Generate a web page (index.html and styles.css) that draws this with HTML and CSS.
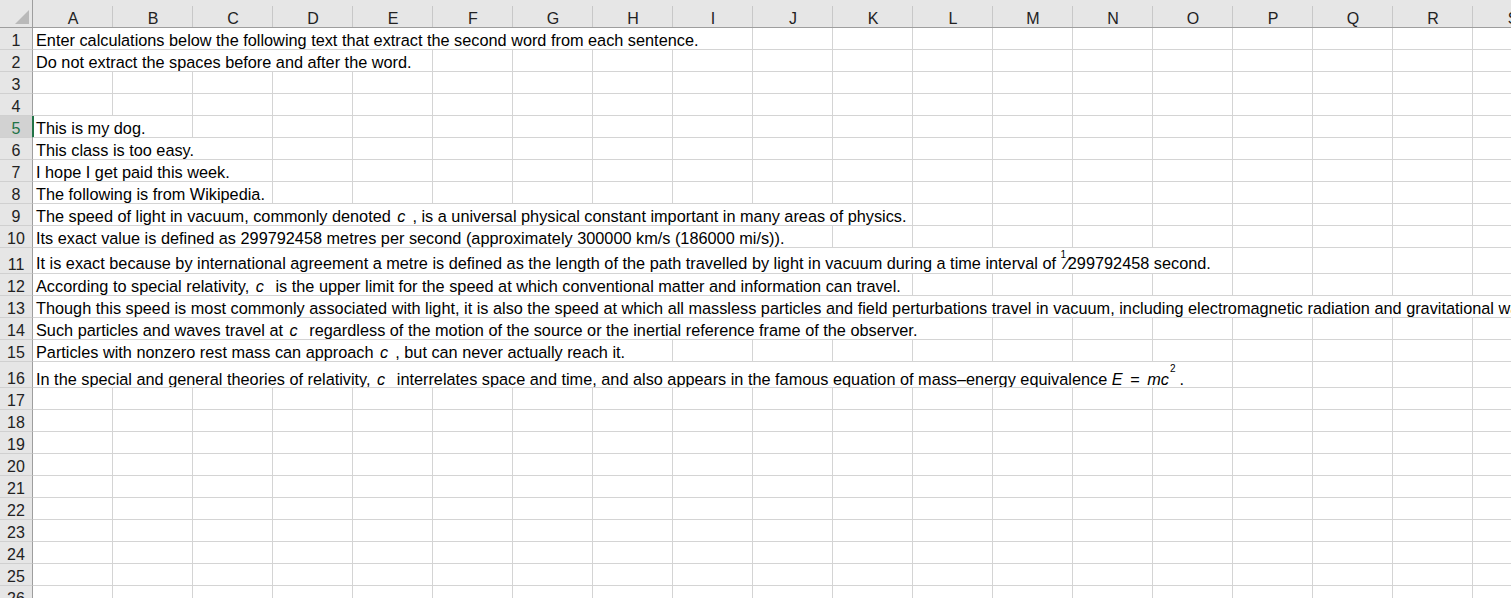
FILE: index.html
```html
<!DOCTYPE html>
<html>
<head>
    <link rel="stylesheet" href="styles.css">
</head>
<body>
    <div class="sheet">
        <div class="row head">
            <div class="corner">
                <svg width="14" height="14" viewBox="0 0 14 14"><polygon points="14,0 14,14 0,14" fill="#b9b9b9"/></svg>
            </div>
            <div class="col">A</div>
            <div class="col">B</div>
            <div class="col">C</div>
            <div class="col">D</div>
            <div class="col">E</div>
            <div class="col">F</div>
            <div class="col">G</div>
            <div class="col">H</div>
            <div class="col">I</div>
            <div class="col">J</div>
            <div class="col">K</div>
            <div class="col">L</div>
            <div class="col">M</div>
            <div class="col">N</div>
            <div class="col">O</div>
            <div class="col">P</div>
            <div class="col">Q</div>
            <div class="col">R</div>
            <div class="col">S</div>
            <div class="col">T</div>
        </div>

        <div class="row"><div class="num">1</div><div class="cell span-9">Enter calculations below the following text that extract the second word from each sentence.</div></div>
        <div class="row"><div class="num">2</div><div class="cell span-5">Do not extract the spaces before and after the word.</div></div>
        <div class="row"><div class="num">3</div></div>
        <div class="row"><div class="num">4</div></div>
        <div class="row"><div class="num active">5</div><div class="cell span-2 active">This is my dog.</div></div>
        <div class="row"><div class="num">6</div><div class="cell span-3">This class is too easy.</div></div>
        <div class="row"><div class="num">7</div><div class="cell span-3">I hope I get paid this week.</div></div>
        <div class="row"><div class="num">8</div><div class="cell span-3">The following is from Wikipedia.</div></div>
        <div class="row"><div class="num">9</div><div class="cell span-11">The speed of light in vacuum, commonly denoted <i class="var">c</i>, is a universal physical constant important in many areas of physics.</div></div>
        <div class="row"><div class="num">10</div><div class="cell span-10">Its exact value is defined as 299792458 metres per second (approximately 300000 km/s (186000 mi/s)).</div></div>
        <div class="row tall"><div class="num">11</div><div class="cell span-15">It is exact because by international agreement a metre is defined as the length of the path travelled by light in vacuum during a time interval of <sup>1</sup><span class="frasl">&frasl;</span>299792458 second.</div></div>
        <div class="row"><div class="num">12</div><div class="cell span-11">According to special relativity, <i class="var">c</i> is the upper limit for the speed at which conventional matter and information can travel.</div></div>
        <div class="row"><div class="num">13</div><div class="cell span-20">Though this speed is most commonly associated with light, it is also the speed at which all massless particles and field perturbations travel in vacuum, including electromagnetic radiation and gravitational waves.</div></div>
        <div class="row"><div class="num">14</div><div class="cell span-12">Such particles and waves travel at <i class="var">c</i> regardless of the motion of the source or the inertial reference frame of the observer.</div></div>
        <div class="row"><div class="num">15</div><div class="cell span-8">Particles with nonzero rest mass can approach <i class="var">c</i>, but can never actually reach it.</div></div>
        <div class="row tall"><div class="num">16</div><div class="cell span-15">In the special and general theories of relativity, <i class="var">c</i> interrelates space and time, and also appears in the famous equation of mass&ndash;energy equivalence <i>E</i> <span class="op">=</span> <i class="power">mc</i><sup class="pow">2</sup>.</div></div>
        <div class="row"><div class="num">17</div></div>
        <div class="row"><div class="num">18</div></div>
        <div class="row"><div class="num">19</div></div>
        <div class="row"><div class="num">20</div></div>
        <div class="row"><div class="num">21</div></div>
        <div class="row"><div class="num">22</div></div>
        <div class="row"><div class="num">23</div></div>
        <div class="row"><div class="num">24</div></div>
        <div class="row"><div class="num">25</div></div>
        <div class="row"><div class="num">26</div></div>
    </div>
</body>
</html>
```

FILE: styles.css
```css
body {
    margin: 0;
    padding: 0;
    overflow: hidden;
    background: #fff;
    font-family: "Liberation Sans", Arial, sans-serif;
    font-size: 16px;
    color: #000;
}

.sheet {
    width: 1633px;
}

.row {
    display: grid;
    grid-template-columns: 33px repeat(20, 80px);
    height: 22px;
    background-image:
        linear-gradient(#d4d4d4, #d4d4d4),
        repeating-linear-gradient(to right, transparent 0 79px, #d4d4d4 79px 80px);
    background-size: 100% 1px, auto;
    background-position: 0 100%, 33px 0;
    background-repeat: no-repeat, repeat;
}

.row.tall {
    height: 26px;
}

.row.head {
    height: 28px;
    background: #e6e6e6;
}

.corner {
    box-sizing: border-box;
    display: flex;
    align-items: flex-end;
    justify-content: flex-end;
    padding: 0 3px 3px 0;
    border-right: 1px solid #9e9e9e;
    border-bottom: 1px solid #9e9e9e;
}

.col {
    box-sizing: border-box;
    display: flex;
    align-items: flex-end;
    justify-content: center;
    line-height: 17px;
    color: #222;
    border-bottom: 1px solid #9e9e9e;
    background: linear-gradient(#c8c8c8, #c8c8c8) no-repeat right bottom / 1px 21px;
}

.num {
    box-sizing: border-box;
    display: flex;
    align-items: flex-end;
    justify-content: center;
    line-height: 17px;
    color: #222;
    background: #e6e6e6;
    border-right: 1px solid #9e9e9e;
    border-bottom: 1px solid #d0d0d0;
}

.num.active {
    background: #d2d2d2;
    color: #217346;
    border-right-color: #217346;
}

.cell {
    box-sizing: border-box;
    margin: 0 1px 1px 0;
    padding: 4px 0 0 3px;
    font-size: 16.3px;
    line-height: 17px;
    white-space: nowrap;
    overflow: hidden;
    background: #fff;
}

.tall .cell {
    padding-top: 7px;
}

.cell.active {
    box-shadow: inset 1px 0 #217346;
}

.span-2 { grid-column: span 2; }
.span-3 { grid-column: span 3; }
.span-5 { grid-column: span 5; }
.span-8 { grid-column: span 8; }
.span-9 { grid-column: span 9; }
.span-10 { grid-column: span 10; }
.span-11 { grid-column: span 11; }
.span-12 { grid-column: span 12; }
.span-15 { grid-column: span 15; }
.span-20 { grid-column: span 20; }

.var {
    padding: 0 7px 0 2px;
}

.op {
    padding: 0 2px 0 3px;
}

.power {
    padding: 0 1px 0 1px;
}

sup {
    font-size: 10px;
    line-height: 0;
    vertical-align: 11px;
}

sup.pow {
    vertical-align: 13px;
    margin-right: 4px;
}

.frasl {
    font-family: "DejaVu Sans", sans-serif;
    margin-left: -1px;
}
```
